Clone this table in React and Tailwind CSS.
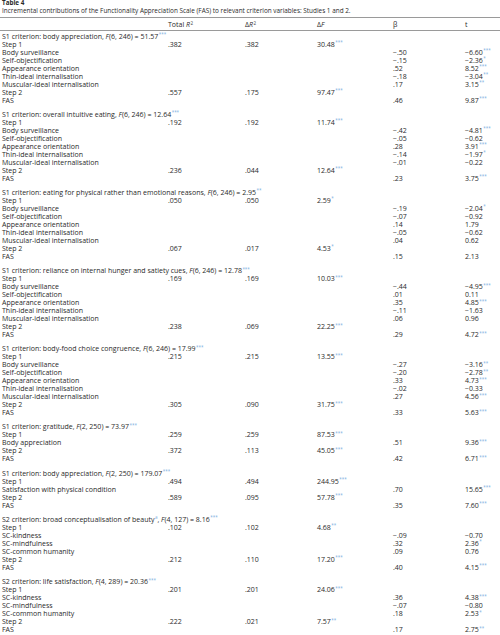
import React from 'react';

const groups = [
  {
    label: ['S1 criterion: body appreciation, ', '(6, 246) = 51.57', '***'],
    rows: [
      ['Step 1', '.382', '.382', '30.48***', '', ''],
      ['Body surveillance', '', '', '', '−.50', '−6.60***'],
      ['Self-objectification', '', '', '', '−.15', '−2.36*'],
      ['Appearance orientation', '', '', '', '.52', '8.52***'],
      ['Thin-ideal internalisation', '', '', '', '−.18', '−3.04**'],
      ['Muscular-ideal internalisation', '', '', '', '.17', '3.15**'],
      ['Step 2', '.557', '.175', '97.47***', '', ''],
      ['FAS', '', '', '', '.46', '9.87***'],
    ],
  },
  {
    label: ['S1 criterion: overall intuitive eating, ', '(6, 246) = 12.64', '***'],
    rows: [
      ['Step 1', '.192', '.192', '11.74***', '', ''],
      ['Body surveillance', '', '', '', '−.42', '−4.81***'],
      ['Self-objectification', '', '', '', '−.05', '−0.62'],
      ['Appearance orientation', '', '', '', '.28', '3.91***'],
      ['Thin-ideal internalisation', '', '', '', '−.14', '−1.97*'],
      ['Muscular-ideal internalisation', '', '', '', '−.01', '−0.22'],
      ['Step 2', '.236', '.044', '12.64***', '', ''],
      ['FAS', '', '', '', '.23', '3.75***'],
    ],
  },
  {
    label: ['S1 criterion: eating for physical rather than emotional reasons, ', '(6, 246) = 2.95', '**'],
    rows: [
      ['Step 1', '.050', '.050', '2.59*', '', ''],
      ['Body surveillance', '', '', '', '−.19', '−2.04*'],
      ['Self-objectification', '', '', '', '−.07', '−0.92'],
      ['Appearance orientation', '', '', '', '.14', '1.79'],
      ['Thin-ideal internalisation', '', '', '', '−.05', '−0.62'],
      ['Muscular-ideal internalisation', '', '', '', '.04', '0.62'],
      ['Step 2', '.067', '.017', '4.53*', '', ''],
      ['FAS', '', '', '', '.15', '2.13'],
    ],
  },
  {
    label: ['S1 criterion: reliance on internal hunger and satiety cues, ', '(6, 246) = 12.78', '***'],
    rows: [
      ['Step 1', '.169', '.169', '10.03***', '', ''],
      ['Body surveillance', '', '', '', '−.44', '−4.95***'],
      ['Self-objectification', '', '', '', '.01', '0.11'],
      ['Appearance orientation', '', '', '', '.35', '4.85***'],
      ['Thin-ideal internalisation', '', '', '', '−.11', '−1.63'],
      ['Muscular-ideal internalisation', '', '', '', '.06', '0.96'],
      ['Step 2', '.238', '.069', '22.25***', '', ''],
      ['FAS', '', '', '', '.29', '4.72***'],
    ],
  },
  {
    label: ['S1 criterion: body-food choice congruence, ', '(6, 246) = 17.99', '***'],
    rows: [
      ['Step 1', '.215', '.215', '13.55***', '', ''],
      ['Body surveillance', '', '', '', '−.27', '−3.16**'],
      ['Self-objectification', '', '', '', '−.20', '−2.78**'],
      ['Appearance orientation', '', '', '', '.33', '4.73***'],
      ['Thin-ideal internalisation', '', '', '', '−.02', '−0.33'],
      ['Muscular-ideal internalisation', '', '', '', '.27', '4.56***'],
      ['Step 2', '.305', '.090', '31.75***', '', ''],
      ['FAS', '', '', '', '.33', '5.63***'],
    ],
  },
  {
    label: ['S1 criterion: gratitude, ', '(2, 250) = 73.97', '***'],
    rows: [
      ['Step 1', '.259', '.259', '87.53***', '', ''],
      ['Body appreciation', '', '', '', '.51', '9.36***'],
      ['Step 2', '.372', '.113', '45.05***', '', ''],
      ['FAS', '', '', '', '.42', '6.71***'],
    ],
  },
  {
    label: ['S1 criterion: body appreciation, ', '(2, 250) = 179.07', '***'],
    rows: [
      ['Step 1', '.494', '.494', '244.95***', '', ''],
      ['Satisfaction with physical condition', '', '', '', '.70', '15.65***'],
      ['Step 2', '.589', '.095', '57.78***', '', ''],
      ['FAS', '', '', '', '.35', '7.60***'],
    ],
  },
  {
    label: ['S2 criterion: broad conceptualisation of beauty', '(4, 127) = 8.16', '***'],
    note: 'a',
    rows: [
      ['Step 1', '.102', '.102', '4.68**', '', ''],
      ['SC-kindness', '', '', '', '−.09', '−0.70'],
      ['SC-mindfulness', '', '', '', '.32', '2.36*'],
      ['SC-common humanity', '', '', '', '.09', '0.76'],
      ['Step 2', '.212', '.110', '17.20***', '', ''],
      ['FAS', '', '', '', '.40', '4.15***'],
    ],
  },
  {
    label: ['S2 criterion: life satisfaction, ', '(4, 289) = 20.36', '***'],
    rows: [
      ['Step 1', '.201', '.201', '24.06***', '', ''],
      ['SC-kindness', '', '', '', '.36', '4.38***'],
      ['SC-mindfulness', '', '', '', '−.07', '−0.80'],
      ['SC-common humanity', '', '', '', '.18', '2.53*'],
      ['Step 2', '.222', '.021', '7.57**', '', ''],
      ['FAS', '', '', '', '.17', '2.75**'],
    ],
  },
];

const cols = 'grid grid-cols-[166px_77px_72px_76px_72px_1fr] h-[8px] leading-[8px] whitespace-nowrap';

function Sup({ children }) {
  return <span className="relative -top-[2.5px] ml-[0.5px] text-[4.5px] leading-none text-[#7aaee0]">{children}</span>;
}

function Val({ v }) {
  const m = v.match(/^(.*?)(\**)$/);
  return (
    <>
      {m[1]}
      {m[2] && <Sup>{m[2]}</Sup>}
    </>
  );
}

export default function App() {
  return (
    <div className="w-[500px] h-[635px] overflow-hidden bg-white text-[#2a2a2a] text-[7px] px-[2px]" style={{ fontFamily: '"Open Sans", "Liberation Sans", sans-serif' }}>
      <div className="-mt-[2px] h-[9px] leading-[9px] text-[6.3px] font-bold">Table 4</div>
      <div className="h-[8px] leading-[8px] text-[6.4px]">
        Incremental contributions of the Functionality Appreciation Scale (FAS) to relevant criterion variables: Studies 1 and 2.
      </div>
      <div className="mt-[2px] -mx-[2px] border-t border-[#9a9a9a]" />
      <div className={`${cols} mt-[3px]`}>
        <span />
        <span>Total <i>R</i><Sup><span className="text-[#444]">2</span></Sup></span>
        <span>Δ<i>R</i><Sup><span className="text-[#444]">2</span></Sup></span>
        <span>Δ<i>F</i></span>
        <span>β</span>
        <span>t</span>
      </div>
      <div className="mt-[1px] -mx-[2px] border-t border-[#9a9a9a]" />
      <div className="mt-[1.5px]">
        {groups.map((g, gi) => (
          <div key={gi} className={gi ? 'mt-[6.2px]' : ''}>
            <div className="h-[8px] leading-[8px] whitespace-nowrap">
              {g.label[0]}
              {g.note && <Sup>{g.note}</Sup>}
              {g.note && ', '}
              <i>F</i>
              {g.label[1]}
              <Sup>{g.label[2]}</Sup>
            </div>
            {g.rows.map((r, ri) => (
              <div key={ri} className={cols}>
                {r.map((c, ci) => (
                  <span key={ci}>
                    <Val v={c} />
                  </span>
                ))}
              </div>
            ))}
          </div>
        ))}
      </div>
    </div>
  );
}
